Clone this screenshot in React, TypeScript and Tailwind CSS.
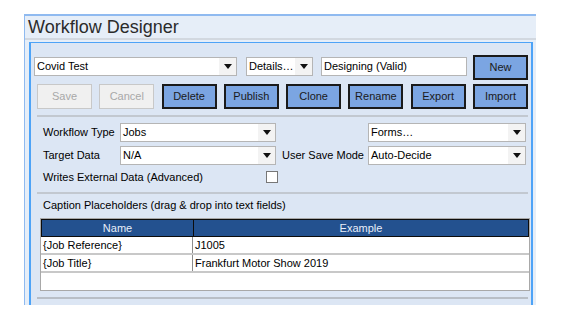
const FONT = { fontFamily: '"Liberation Sans", Arial, sans-serif' };

function Select({ value, className }: { value: string; className: string }) {
  return (
    <div className={`flex items-center bg-white border border-[#b5b5b5] h-[19px] ${className}`}>
      <span className="flex-1 pl-[2px] text-[11px] text-black leading-none whitespace-nowrap overflow-hidden">{value}</span>
      <span className="w-[17px] h-full flex items-center justify-center bg-[#f3f3f3]">
        <svg width="8" height="5" viewBox="0 0 8 5"><path d="M0 0h8L4 5z" fill="#111" /></svg>
      </span>
    </div>
  );
}

function Btn({ label, disabled }: { label: string; disabled?: boolean }) {
  return (
    <button
      className={`w-[55px] h-[25px] text-[11px] leading-none ${
        disabled ? "bg-[#f0f0f0] border border-[#c8c8c8] text-[#a8a8a8]" : "bg-[#7ba5e2] border-2 border-[#1a1a1a] text-[#1a1a1a]"
      }`}
    >
      {label}
    </button>
  );
}

export default function App() {
  return (
    <div className="w-[570px] h-[318px] bg-white pl-[24px] pt-[14px]" style={FONT}>
      <div className="w-[512px] h-[291px] bg-[#e6eef8] border-t-2 border-l border-[#8fbaf0] flex flex-col">
        {/* Title */}
        <div className="h-[24px] pl-[3px] flex items-center text-[18px] text-[#2b2b2b] border-b-2 border-[#d2d8e0] whitespace-nowrap">
          Workflow Designer
        </div>
        <div className="flex-1 ml-[4px] mt-[2px] mr-[3px] bg-[#dce6f4] border-l-2 border-t border-r-2 border-[#4da3f7] pl-[3px] pr-[2px] pt-[11px] flex flex-col">
          {/* Top row */}
          <div className="flex items-center h-[25px]">
            <Select value="Covid Test" className="w-[203px]" />
            <Select value="Details…" className="w-[67px] ml-[9px]" />
            <div className="w-[146px] h-[19px] ml-[8px] bg-white border border-[#b5b5b5] pl-[2px] text-[11px] flex items-center whitespace-nowrap">
              Designing (Valid)
            </div>
            <div className="ml-[6px]"><Btn label="New" /></div>
          </div>
          {/* Action buttons */}
          <div className="flex justify-between w-[491px] ml-[3px] mt-[5px]">
            <Btn label="Save" disabled />
            <Btn label="Cancel" disabled />
            <Btn label="Delete" />
            <Btn label="Publish" />
            <Btn label="Clone" />
            <Btn label="Rename" />
            <Btn label="Export" />
            <Btn label="Import" />
          </div>
          <div className="ml-[3px] w-[491px] mt-[6px] h-[2px] bg-[#c2c8d0]" />
          {/* Settings */}
          <div className="pl-[9px] mt-[6px] flex flex-col text-[11px] text-black whitespace-nowrap">
            <div className="flex items-center h-[19px]">
              <span className="w-[77px]">Workflow Type</span>
              <Select value="Jobs" className="w-[156px]" />
              <Select value="Forms…" className="w-[158px] ml-[92px]" />
            </div>
            <div className="flex items-center h-[19px] mt-[4px]">
              <span className="w-[77px]">Target Data</span>
              <Select value="N/A" className="w-[156px]" />
              <span className="w-[92px] text-right pr-[4px]">User Save Mode</span>
              <Select value="Auto-Decide" className="w-[158px]" />
            </div>
            <div className="flex items-center h-[20px] mt-[2px]">
              <span className="w-[223px]">Writes External Data (Advanced)</span>
              <span className="w-[12px] h-[12px] bg-white border border-[#777]" />
            </div>
          </div>
          <div className="ml-[3px] w-[491px] mt-[5px] h-[2px] bg-[#c2c8d0]" />
          <div className="pl-[9px] mt-[5px] h-[13px] leading-[13px] text-[11px] text-black whitespace-nowrap">
            Caption Placeholders (drag &amp; drop into text fields)
          </div>
          {/* Table */}
          <div className="ml-[6px] mt-[6px] w-[490px] h-[73px] bg-white border border-[#a8a8a8] flex flex-col text-[11px] whitespace-nowrap">
            <div className="flex h-[18px] shrink-0 bg-[#23518f] text-[#e8eef8] border border-[#0c0c0c]">
              <div className="w-[152px] text-center border-r border-[#0c0c0c] leading-[16px]">Name</div>
              <div className="flex-1 text-center leading-[16px]">Example</div>
            </div>
            {[["{Job Reference}", "J1005"], ["{Job Title}", "Frankfurt Motor Show 2019"]].map(([a, b]) => (
              <div key={a} className="flex h-[18px] shrink-0 border-b-2 border-[#c8c8c8]">
                <div className="w-[152px] pl-[2px] border-r border-[#8c8c8c] leading-[16px]">{a}</div>
                <div className="flex-1 pl-[2px] leading-[16px]">{b}</div>
              </div>
            ))}
          </div>
          <div className="ml-[3px] w-[491px] mt-[6px] h-[2px] bg-[#b8bec6]" />
        </div>
      </div>
    </div>
  );
}
